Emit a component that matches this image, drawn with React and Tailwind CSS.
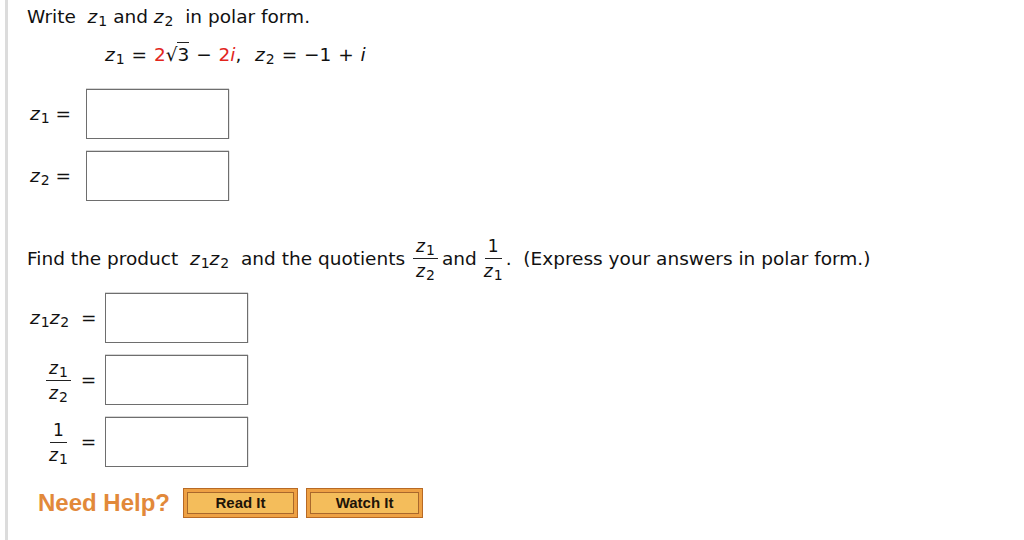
import React from 'react';

const Z = ({ n }) => (
  <span className="whitespace-nowrap">
    <i className="italic">z</i>
    <sub className="text-[14px] relative top-[3px] align-baseline ml-[1px]">{n}</sub>
  </span>
);

const Frac = ({ top, bottom }) => (
  <span className="inline-flex flex-col items-center align-middle leading-[22px] text-[17px] mx-[4px]">
    <span className="border-b border-[#222] px-[3px] pb-[1px]">{top}</span>
    <span className="px-[3px] pt-[1px]">{bottom}</span>
  </span>
);

const Box = () => (
  <div className="w-[143px] h-[50px] border border-[#6e6e6e] bg-white shadow-[0_-1px_0_0_#d6d6d6,1px_0_0_0_#e6e6e6]"></div>
);

const HelpButton = ({ label, w }) => (
  <button className={`${w} h-[30px] border border-[#b86a25] bg-[#eea144] p-[3px]`}>
    <span className="flex h-full items-center justify-center border border-[#a9682c] bg-[#f4bd5b] text-[15px] font-bold text-[#1e1408] font-['Liberation_Sans',Arial,sans-serif]">
      {label}
    </span>
  </button>
);

export default function App() {
  return (
    <div className="min-h-[540px] w-[1024px] bg-white">
      <div className="ml-[5px] min-h-[540px] border-l-[3px] border-[#dcdcdc] pl-[19px] pt-[4px] text-[18.5px] text-[#111] font-['DejaVu_Sans',Verdana,sans-serif]">
        {/* prompt */}
        <p className="leading-[26px]">
          Write&nbsp; <Z n="1" /> and <Z n="2" />&nbsp; in polar form.
        </p>
        <p className="mt-[12px] ml-[78px] leading-[26px] whitespace-nowrap [word-spacing:1px]">
          <Z n="1" /> = <span className="text-[#e2261d]">2</span>
          <span>√</span>
          <span className="border-t border-[#222] pt-[1px]">3</span> − <span className="text-[#e2261d]">2<i>i</i></span>,&nbsp; <Z n="2" /> = −1 + <i>i</i>
        </p>

        <div className="mt-[21px] flex flex-col gap-[12px]">
          <div className="flex items-center">
            <span className="w-[59px] pl-[3px]"><Z n="1" /> =</span>
            <Box />
          </div>
          <div className="flex items-center">
            <span className="w-[59px] pl-[3px]"><Z n="2" /> =</span>
            <Box />
          </div>
        </div>

        <p className="mt-[34px] flex items-center leading-[26px] whitespace-nowrap">
          <span>Find the product&nbsp; <Z n="1" /><Z n="2" />&nbsp; and the quotients</span>
          <span className="ml-[4px]"><Frac top={<Z n="1" />} bottom={<Z n="2" />} /></span>
          <span>and</span>
          <Frac top="1" bottom={<Z n="1" />} />
          <span className="-ml-[4px]">.&nbsp; (Express your answers in polar form.)</span>
        </p>

        <div className="mt-[11px] flex flex-col gap-[12px]">
          <div className="flex items-center">
            <span className="w-[78px] pl-[3px]"><Z n="1" /><Z n="2" />&nbsp; =</span>
            <Box />
          </div>
          <div className="flex items-center">
            <span className="flex w-[78px] items-center pl-[15px]">
              <Frac top={<Z n="1" />} bottom={<Z n="2" />} />
              <span className="ml-[6px]">=</span>
            </span>
            <Box />
          </div>
          <div className="flex items-center">
            <span className="flex w-[78px] items-center pl-[15px]">
              <Frac top="1" bottom={<Z n="1" />} />
              <span className="ml-[6px]">=</span>
            </span>
            <Box />
          </div>
        </div>

        <div className="mt-[18px] flex items-center gap-[8px]">
          <span className="ml-[11px] mr-[5px] text-[24px] font-bold text-[#e2893a] font-['Liberation_Sans',Arial,sans-serif]">
            Need Help?
          </span>
          <HelpButton label="Read It" w="w-[115px]" />
          <HelpButton label="Watch It" w="w-[117px]" />
        </div>
      </div>
    </div>
  );
}
